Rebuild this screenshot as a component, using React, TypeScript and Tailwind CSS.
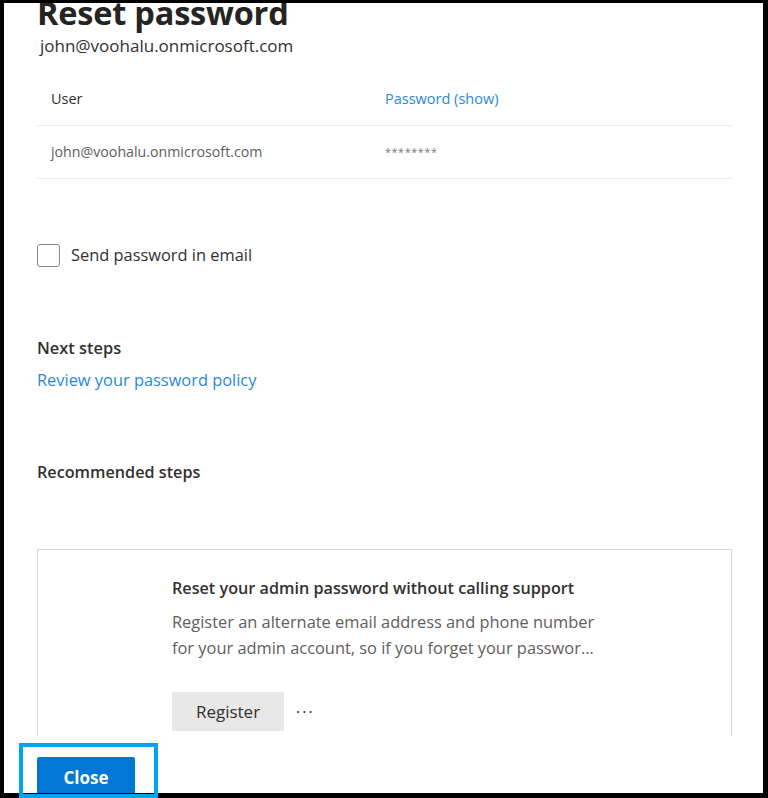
export default function App() {
  return (
    <div className="relative w-[768px] h-[798px] bg-black pt-[3px] pl-[4px] pr-[5px] pb-[5px] font-['Open_Sans',sans-serif]">
      <div className="w-full h-full bg-white overflow-hidden flex flex-col">
        {/* Scrollable body */}
        <div className="h-[733px] shrink-0 overflow-hidden pl-[33px] pr-[31px]">
          <h1 className="mt-[-6px] h-[32px] text-[32.5px] leading-[32px] font-bold text-[#252423] tracking-[-0.2px]">
            Reset password
          </h1>
          <div className="mt-[5px] ml-[3px] h-[24px] text-[17px] leading-[24px] text-[#323130]">
            john@voohalu.onmicrosoft.com
          </div>

          {/* User table */}
          <div className="mt-[12px]">
            <div className="h-[56px] grid grid-cols-[334px_1fr] items-center pl-[14px] border-b border-[#edebe9] text-[14.5px] pt-[2px]">
              <span className="text-[#323130]">User</span>
              <span className="text-[#2b88d8]">Password (show)</span>
            </div>
            <div className="h-[53px] grid grid-cols-[334px_1fr] items-center pl-[14px] border-b border-[#edebe9] text-[14.2px] text-[#605e5c]">
              <span>john@voohalu.onmicrosoft.com</span>
              <span className="text-[11px] tracking-[0.5px] text-[#797775]">********</span>
            </div>
          </div>

          <label className="mt-[64px] h-[24px] flex items-center gap-[11px]">
            <span className="w-[23px] h-[23px] rounded-[3px] border border-[#8a8886] bg-white" />
            <span className="text-[16.4px] text-[#323130]">Send password in email</span>
          </label>

          <div className="mt-[69px] h-[24px] text-[16.4px] leading-[24px] font-semibold text-[#323130]">
            Next steps
          </div>
          <a href="#policy" className="block mt-[8px] h-[24px] text-[16.4px] leading-[24px] text-[#2b88d8]">
            Review your password policy
          </a>

          <div className="mt-[68px] h-[24px] text-[16.2px] leading-[24px] font-semibold text-[#323130]">
            Recommended steps
          </div>

          {/* Recommendation card */}
          <div className="mt-[65px] border border-[#d6d6d6] pl-[134px] pt-[26px] pb-[20px]">
            <div className="h-[24px] text-[16.2px] leading-[24px] font-semibold text-[#323130]">
              Reset your admin password without calling support
            </div>
            <div className="mt-[9px] w-[430px] text-[16.4px] leading-[26px] text-[#605e5c]">
              <div>Register an alternate email address and phone number</div>
              <div className="truncate">for your admin account, so if you forget your passwor…</div>
            </div>
            <div className="mt-[31px] flex items-center gap-[12px]">
              <button className="w-[112px] h-[39px] rounded-[2px] bg-[#e8e8e8] text-[17px] text-[#323130]">
                Register
              </button>
              <span className="text-[16px] text-[#323130] tracking-[2px]">···</span>
            </div>
          </div>
        </div>

        {/* Footer */}
        <div className="pt-[21px] pl-[33px]">
          <button className="w-[98px] h-[42px] rounded-[2px] bg-[#0078d4] text-white text-[17px] font-bold">
            Close
          </button>
        </div>
      </div>

      {/* Highlight annotation */}
      <div className="absolute left-[19px] top-[743px] w-[139px] h-[55px] border-4 border-[#00a4ef]" />
    </div>
  );
}
